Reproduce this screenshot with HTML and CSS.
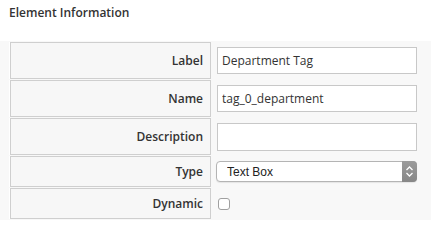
FILE: index.html
```html
<!DOCTYPE html>
<html lang="en">
<head>
    <meta charset="UTF-8">
    <meta name="viewport" content="width=device-width, initial-scale=1.0">
    <title>Element Information</title>
    <link rel="stylesheet" href="styles.css">
</head>
<body>
    <h2 class="section-title">Element Information</h2>

    <div class="panel">
        <table class="info-table">
            <tr class="row-tall">
                <th class="field-label">Label</th>
                <td class="field-value"><input class="text-input" type="text" value="Department Tag"></td>
            </tr>
            <tr class="row-tall">
                <th class="field-label">Name</th>
                <td class="field-value"><input class="text-input" type="text" value="tag_0_department"></td>
            </tr>
            <tr class="row-tall">
                <th class="field-label">Description</th>
                <td class="field-value"><input class="text-input desc" type="text" value=""></td>
            </tr>
            <tr class="row-short">
                <th class="field-label">Type</th>
                <td class="field-value">
                    <div class="select-wrap">
                        <select class="type-select">
                            <option>Text Box</option>
                            <option>Drop Down</option>
                            <option>Check Box</option>
                        </select>
                        <span class="select-arrows">
                            <svg width="9" height="13" viewBox="0 0 9 13">
                                <polyline points="1.5,5 4.5,2 7.5,5" fill="none" stroke="#fff" stroke-width="1.3"/>
                                <polyline points="1.5,8 4.5,11 7.5,8" fill="none" stroke="#fff" stroke-width="1.3"/>
                            </svg>
                        </span>
                    </div>
                </td>
            </tr>
            <tr class="row-short">
                <th class="field-label">Dynamic</th>
                <td class="field-value"><input class="check" type="checkbox"></td>
            </tr>
        </table>
    </div>
</body>
</html>
```

FILE: styles.css
```css
body {
    margin: 0;
    background-color: #fff;
    font-family: 'Open Sans', 'Liberation Sans', sans-serif;
    color: #333;
}
h2.section-title {
    font-size: 12px;
    font-weight: 600;
    line-height: 18px;
    margin: 0 0 19px 0;
    padding: 4px 9px 0 9px;
    color: #333;
}
.panel {
    background-color: #f8f8f8;
    padding-left: 9px;
}
.info-table {
    border-collapse: separate;
    border-spacing: 1px;
}
.row-tall {
    height: 37px;
}
.row-short {
    height: 31px;
}
.field-label {
    width: 192px;
    padding: 0 7px 0 0;
    text-align: right;
    font-size: 12px;
    font-weight: 600;
    line-height: 16px;
    color: #333;
    background-color: #f7f7f7;
    border: 1px solid #cfcfcf;
    box-shadow: -1px 0 0 #fff;
}
.field-value {
    padding: 0 5px;
    vertical-align: middle;
    line-height: 16px;
}
.text-input {
    box-sizing: border-box;
    display: block;
    width: 200px;
    height: 27px;
    margin: 0;
    padding: 0 4px;
    border: 1px solid #c8c8c8;
    background-color: #fff;
    font-family: 'Open Sans', 'Liberation Sans', sans-serif;
    font-size: 12px;
    color: #333;
    outline: none;
}
.text-input.desc {
    height: 28px;
}
.select-wrap {
    position: relative;
    width: 201px;
    height: 21px;
    margin-left: -1px;
}
.type-select {
    -webkit-appearance: none;
    appearance: none;
    box-sizing: border-box;
    display: block;
    width: 201px;
    height: 21px;
    padding: 0 0 0 10px;
    border: 1px solid #b4b4b4;
    border-radius: 4px;
    background-color: #fff;
    box-shadow: 0 1px 1px rgba(0, 0, 0, 0.08);
    font-family: 'Liberation Sans', Arial, sans-serif;
    font-size: 12px;
    color: #222;
    outline: none;
}
.select-arrows {
    position: absolute;
    top: 0;
    right: 0;
    width: 15px;
    height: 21px;
    border-radius: 0 4px 4px 0;
    background: linear-gradient(#9c9c9c, #878787);
    display: flex;
    justify-content: center;
    align-items: center;
    pointer-events: none;
}
.check {
    -webkit-appearance: none;
    appearance: none;
    display: block;
    width: 12px;
    height: 12px;
    margin: 1px 0 0 1px;
    border: 1px solid #a0a0a0;
    border-radius: 3px;
    background-color: #fff;
}
```
